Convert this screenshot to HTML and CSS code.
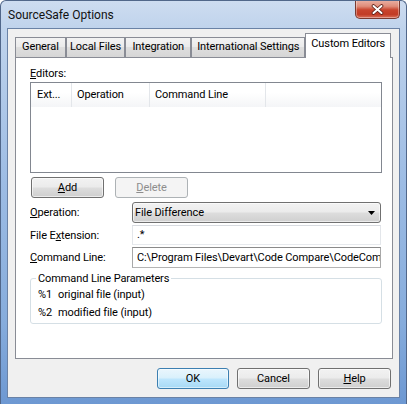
FILE: index.html
```html
<!DOCTYPE html>
<html>
<head>
<meta charset="utf-8">
<title>SourceSafe Options</title>
<link rel="stylesheet" href="styles.css">
</head>
<body>
<div class="window">
  <div class="titlebar">
    <span class="title">SourceSafe Options</span>
    <div class="close">
      <svg width="13" height="11" viewBox="0 0 13 11">
        <path d="M2.5 2 L10.5 9 M10.5 2 L2.5 9" stroke="#5a2018" stroke-width="3.6" stroke-linecap="round"/>
        <path d="M2.5 2 L10.5 9 M10.5 2 L2.5 9" stroke="#ffffff" stroke-width="2" stroke-linecap="round"/>
      </svg>
    </div>
  </div>
  <div class="client">
    <div class="tabs">
      <div class="tab t-general">General</div>
      <div class="tab t-local">Local Files</div>
      <div class="tab t-integ">Integration</div>
      <div class="tab t-intl">International Settings</div>
      <div class="tab active t-custom">Custom Editors</div>
    </div>
    <div class="panel">
      <div class="editors-label"><u>E</u>ditors:</div>
      <div class="listview">
        <div class="lv-header">
          <div class="col c-ext">Ext...</div>
          <div class="col c-op">Operation</div>
          <div class="col c-cmd">Command Line</div>
          <div class="col c-rest"></div>
        </div>
      </div>
      <div class="btnrow">
        <button class="btn"><u>A</u>dd</button>
        <button class="btn disabled" disabled><u>D</u>elete</button>
      </div>
      <div class="form">
        <div class="flabel"><u>O</u>peration:</div>
        <div class="combo">
          <span>File Difference</span>
          <svg width="7" height="4" viewBox="0 0 7 4"><polygon points="0,0 7,0 3.5,4" fill="#000"/></svg>
        </div>
        <div class="flabel">File E<u>x</u>tension:</div>
        <div class="textbox light">.*</div>
        <div class="flabel"><u>C</u>ommand Line:</div>
        <div class="textbox dark">C:\Program Files\Devart\Code Compare\CodeCom</div>
      </div>
      <fieldset class="group">
        <legend>Command Line Parameters</legend>
        <div class="param"><span class="pk">%1</span>original file (input)</div>
        <div class="param"><span class="pk">%2</span>modified file (input)</div>
      </fieldset>
    </div>
    <div class="footer">
      <button class="btn default">OK</button>
      <button class="btn">Cancel</button>
      <button class="btn"><u>H</u>elp</button>
    </div>
  </div>
</div>
</body>
</html>
```
FILE: styles.css
```css
html, body {
  margin: 0;
  padding: 0;
  background: #ffffff;
}
body {
  font-family: Roboto, "Noto Sans", sans-serif;
  font-size: 11px;
  letter-spacing: -0.1px;
  color: #000;
}
u { text-decoration: underline; text-underline-offset: 1px; }

.window {
  width: 407px;
  height: 404px;
  box-sizing: border-box;
  display: flex;
  flex-direction: column;
  padding: 0 6px 6px 6px;
  border-radius: 6px 6px 0 0;
  border: 1px solid #51678a;
  border-bottom: none;
  background: linear-gradient(180deg, #cddcf0 0px, #bfd3ec 28px, #9dbce4 45%, #86acdc 80%, #6d98d2 100%);
  overflow: hidden;
}

.titlebar {
  height: 27px;
  display: flex;
  justify-content: space-between;
  align-items: flex-start;
  flex: none;
}
.title {
  margin-top: 6px;
  padding-left: 1px;
  font-size: 12px;
  letter-spacing: 0;
  line-height: 16px;
  color: #111;
}
.close {
  width: 45px;
  height: 19px;
  margin-top: -1px;
  box-sizing: border-box;
  border: 1px solid #7a3a30;
  border-top: none;
  border-radius: 0 0 5px 5px;
  background: linear-gradient(180deg, #eab3a6 0%, #df8c79 35%, #c8442d 55%, #c23c25 80%, #d9705a 100%);
  display: flex;
  align-items: center;
  justify-content: center;
  box-shadow: inset 0 0 0 1px rgba(255,255,255,0.35);
}

.client {
  flex: 1;
  box-sizing: border-box;
  background: #f0f0f0;
  border: 1px solid #6a82a6;
  padding: 4px 8px 0 7px;
  display: flex;
  flex-direction: column;
}

.tabs {
  display: flex;
  align-items: flex-end;
  height: 24px;
  flex: none;
}
.tab {
  box-sizing: border-box;
  height: 20px;
  border: 1px solid #898c95;
  border-bottom: none;
  background: linear-gradient(180deg, #f3f3f3 0%, #ebebeb 45%, #dedede 50%, #d6d6d6 100%);
  text-align: center;
  line-height: 18px;
  white-space: nowrap;
}
.tab.active {
  height: 25px;
  margin-bottom: -1px;
  background: #ffffff;
  position: relative;
  z-index: 1;
  line-height: 20px;
}
.t-general { width: 51px; }
.t-local { width: 60px; }
.t-integ { width: 66px; }
.t-intl { width: 115px; }
.t-custom { width: 86px; }

.panel {
  width: 378px;
  height: 302px;
  box-sizing: border-box;
  border: 1px solid #898c95;
  background: #ffffff;
  padding: 8px 10px 0 14px;
  display: flex;
  flex-direction: column;
  flex: none;
}
.editors-label {
  line-height: 15px;
  height: 15px;
}
.listview {
  margin-top: 1px;
  height: 91px;
  box-sizing: border-box;
  border: 1px solid #828790;
  background: #ffffff;
  flex: none;
}
.lv-header {
  display: flex;
  height: 24px;
  background: linear-gradient(180deg, #ffffff 0%, #ffffff 40%, #f4f5f7 100%);
}
.col {
  box-sizing: border-box;
  border-right: 1px solid #e3e6ea;
  line-height: 24px;
  padding-left: 6px;
  white-space: nowrap;
}
.c-ext { width: 41px; }
.c-op { width: 78px; padding-left: 5px; }
.c-cmd { width: 116px; padding-left: 5px; }
.c-rest { flex: 1; border-right: none; }

.btn {
  font-family: inherit;
  font-size: inherit;
  letter-spacing: inherit;
  color: #000;
  box-sizing: border-box;
  width: 73px;
  height: 21px;
  padding: 0;
  border: 1px solid #707070;
  border-radius: 3px;
  background: linear-gradient(180deg, #f2f2f2 0%, #ebebeb 48%, #dddddd 52%, #cfcfcf 100%);
  box-shadow: inset 0 0 0 1px rgba(255,255,255,0.6);
  line-height: 18px;
}
.btn.disabled {
  color: #8d8d8d;
  border-color: #adb2b5;
  background: #f4f4f4;
  box-shadow: none;
}
.btn.default {
  width: 72px;
  border-color: #3c7fb1;
  background: linear-gradient(180deg, #eaf6fd 0%, #d9f0fc 48%, #bee6fd 52%, #a7d9f5 100%);
  box-shadow: inset 0 0 0 1px rgba(255,255,255,0.5);
}

.btnrow {
  display: flex;
  gap: 11px;
  margin-top: 4px;
  padding-left: 1px;
  flex: none;
}

.form {
  display: grid;
  grid-template-columns: 102px 249px;
  grid-template-rows: 21px 20px 21px;
  row-gap: 2px;
  margin-top: 4px;
  flex: none;
}
.flabel {
  display: flex;
  align-items: center;
  white-space: nowrap;
}
.combo {
  box-sizing: border-box;
  border: 1px solid #707070;
  border-radius: 3px;
  background: linear-gradient(180deg, #f2f2f2 0%, #ebebeb 48%, #dddddd 52%, #cfcfcf 100%);
  box-shadow: inset 0 0 0 1px rgba(255,255,255,0.6);
  display: flex;
  align-items: center;
  justify-content: space-between;
  padding: 0 5px 0 2px;
}
.textbox {
  box-sizing: border-box;
  border: 1px solid #e2e3ea;
  background: #ffffff;
  padding: 0 4px;
  line-height: 18px;
  white-space: nowrap;
  overflow: hidden;
}
.textbox.light {
  border-color: #d8dbe0 #e3e6ea #e7eaee #e3e6ea;
}
.textbox.dark {
  border-color: #8a8a8a #a8a8a8 #b4b4b4 #a8a8a8;
  line-height: 19px;
}

.group {
  margin: 3px 0 0 0;
  padding: 0 7px 0 7px;
  border: 1px solid #d5dfe5;
  border-radius: 3px;
  min-width: 0;
  height: 53px;
  box-sizing: border-box;
}
.group legend {
  padding: 0 2px;
  margin-left: -2px;
  line-height: 15px;
}
.param {
  line-height: 18px;
  white-space: nowrap;
}
.pk {
  display: inline-block;
  width: 20px;
}

.footer {
  display: flex;
  justify-content: flex-end;
  gap: 8px;
  margin-top: 9px;
  flex: none;
}
```
